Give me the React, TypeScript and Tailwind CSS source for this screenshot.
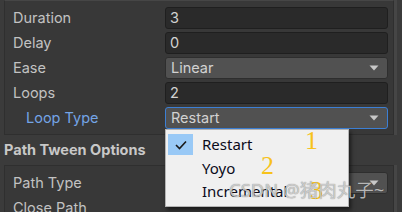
import React from "react";

const Arrow = () => (
  <svg width="10" height="6" viewBox="0 0 10 6" className="shrink-0">
    <path d="M0.5 0.5 L9.5 0.5 L5 5.5 Z" fill="#c8c8c8" />
  </svg>
);

const Field = ({ v }: { v: string }) => (
  <div className="w-[223px] h-[22px] rounded-[3px] bg-[#2a2a2a] border border-[#1f1f1f] flex items-center pl-[4px] text-[#d2d2d2]">
    {v}
  </div>
);

const Select = ({ v, focus }: { v: string; focus?: boolean }) => (
  <div
    className={
      "w-[223px] h-[22px] rounded-[3px] bg-[#515151] border flex items-center justify-between pl-[5px] pr-[8px] text-[#d2d2d2] " +
      (focus ? "border-[#3c7fd4]" : "border-[#2e2e2e]")
    }
  >
    <span>{v}</span>
    <Arrow />
  </div>
);

const Row = ({ label, children, blue }: { label: string; children: React.ReactNode; blue?: boolean }) => (
  <div className="h-[22px] flex items-center">
    <div className={"w-[160px] " + (blue ? "pl-[21px] text-[#74a4e6]" : "pl-[8px] text-[#c2c2c2]")}>{label}</div>
    {children}
  </div>
);

export default function App() {
  return (
    <div
      className="relative w-[402px] h-[212px] overflow-hidden bg-[#3b3b3b] text-[14.5px] leading-none"
      style={{ fontFamily: "Inter, 'Noto Sans', sans-serif" }}
    >
      <div className="flex">
        <div className="ml-[4px] w-[390px] bg-[#383838] border border-[#2f2f2f] border-t-[#464646] pt-[6px] pb-[5px] flex flex-col gap-[3px]">
          <Row label="Duration"><Field v="3" /></Row>
          <Row label="Delay"><Field v="0" /></Row>
          <Row label="Ease"><Select v="Linear" /></Row>
          <Row label="Loops"><Field v="2" /></Row>
          <Row label="Loop Type" blue><Select v="Restart" focus /></Row>
        </div>
        <div className="w-[3px] bg-[#464646]" />
      </div>
      <div className="h-[30px] flex items-center pl-[4px] font-bold text-[#c8c8c8]">Path Tween Options</div>
      <div className="flex">
        <div className="ml-[4px] w-[390px] bg-[#383838] border border-[#2f2f2f] pt-[6px] flex flex-col gap-[3px] h-[60px]">
          <Row label="Path Type"><Select v="Linear" /></Row>
          <Row label="Close Path"><div /></Row>
        </div>
        <div className="w-[3px] bg-[#464646]" />
      </div>

      {/* dropdown menu */}
      <div
        className="absolute left-[165px] top-[129px] w-[184px] h-[78px] bg-[#f0f0f0] border border-[#b4b4b4] shadow-[2px_3px_4px_rgba(0,0,0,0.55)] pt-[3px] text-[15px] text-[#0b0b1a]"
        style={{ fontFamily: "'Noto Sans', sans-serif" }}
      >
        <div className="h-[23.5px] flex items-center">
          <div className="ml-[2px] w-[25px] h-[21px] bg-[#99c9f6] flex items-center justify-center">
            <svg width="12" height="10" viewBox="0 0 12 10">
              <path d="M1 5 L4.5 8.5 L11 1.5" fill="none" stroke="#1a1a1a" strokeWidth="1.6" />
            </svg>
          </div>
          <span className="ml-[9px]">Restart</span>
        </div>
        <div className="h-[23.5px] flex items-center pl-[36px]">Yoyo</div>
        <div className="h-[23.5px] flex items-center pl-[36px]">Incremental</div>
      </div>

      {/* annotations */}
      <div className="absolute left-[305px] top-[128px] text-[26px] text-[#f7c21b]" style={{ fontFamily: "'Liberation Serif', serif" }}>1</div>
      <div className="absolute left-[261px] top-[153px] text-[26px] text-[#f7c21b]" style={{ fontFamily: "'Liberation Serif', serif" }}>2</div>
      <div className="absolute left-[310px] top-[178px] text-[26px] text-[#f7c21b]" style={{ fontFamily: "'Liberation Serif', serif" }}>3</div>

      {/* watermark */}
      <div
        className="absolute left-[229px] top-[181px] text-[18.5px] text-[rgba(220,220,220,0.8)] whitespace-nowrap"
        style={{ fontFamily: "'Noto Sans', 'Noto Sans CJK SC', sans-serif", textShadow: "0 0 1px rgba(0,0,0,0.5)" }}
      >
        CSDN @猪肉丸子~
      </div>
    </div>
  );
}
